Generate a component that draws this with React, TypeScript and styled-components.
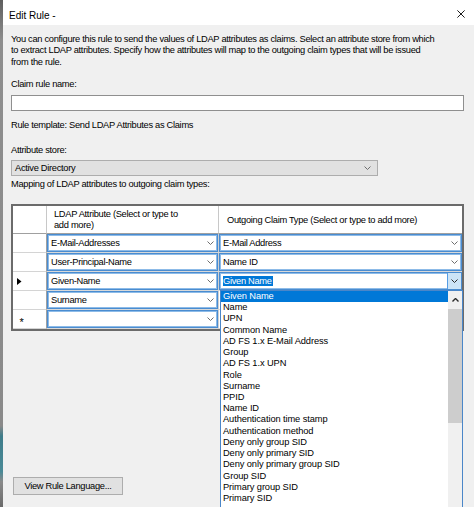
import React from 'react';
import styled, { createGlobalStyle } from 'styled-components';

const SANS = `"Liberation Sans", Arial, sans-serif`;

const Global = createGlobalStyle`
  html, body { margin: 0; padding: 0; width: 474px; height: 507px; overflow: hidden; background: #f0f0f0; }
  #root { width: 474px; height: 507px; }
  * { box-sizing: border-box; }
`;

const Screen = styled.div`
  position: relative;
  display: flex;
  width: 474px;
  height: 507px;
  overflow: hidden;
`;

const Backdrop = styled.div`
  flex: none;
  width: 3px;
  background: linear-gradient(
    to bottom,
    #5e5e5e 0%,
    #8e8e8e 8%,
    #8a8a8a 84%,
    #3e7c8a 86%,
    #4a8a97 93%,
    #8a8a8a 95%,
    #6a6a6a 100%
  );
`;

const Dialog = styled.div`
  flex: 1;
  display: flex;
  flex-direction: column;
  background: #f0f0f0;
`;

const TitleBar = styled.div`
  flex: none;
  height: 25px;
  background: #ffffff;
  display: flex;
  justify-content: space-between;
  align-items: flex-start;
  padding: 0 9px 0 6px;
`;

const TitleText = styled.span`
  margin-top: 9.5px;
  font-family: ${SANS};
  font-size: 10px;
  line-height: 12px;
  color: #000;
`;

const CloseGlyph = styled.svg`
  margin-top: 10px;
  width: 8px;
  height: 8px;
`;

const Body = styled.div`
  flex: 1;
  display: flex;
  flex-direction: column;
  padding: 0 10px 0 8px;
  font-family: ${SANS};
  font-size: 9.3px;
  letter-spacing: -0.3px;
  color: #000;
`;

const Description = styled.p`
  margin: 8.6px 0 0;
  line-height: 11.7px;
  white-space: nowrap;
`;

const Label = styled.div<{ $mt: number }>`
  margin-top: ${(p) => p.$mt}px;
  height: 12px;
  line-height: 12px;
  white-space: nowrap;
`;

const TextInput = styled.input`
  margin-top: 5px;
  height: 16px;
  width: 100%;
  background: #ffffff;
  border: 1px solid #8f8f8f;
  padding: 0 3px;
  outline: none;
  font-family: ${SANS};
  font-size: 9.3px;
`;

const StoreSelect = styled.div`
  margin-top: 4px;
  width: 367px;
  height: 16px;
  display: flex;
  align-items: center;
  justify-content: space-between;
  background: #e1e1e1;
  border: 1px solid #adadad;
  padding: 0 6px 0 3px;
  white-space: nowrap;
`;

const Grid = styled.div`
  margin-top: 14px;
  border: 2px solid #6b6b6b;
  background: #ffffff;
  display: grid;
  grid-template-columns: 34px 172px 243px;
`;

const HeaderCell = styled.div<{ $pl: number; $sep?: boolean }>`
  height: 28px;
  display: flex;
  align-items: center;
  padding: 1px 0 0 ${(p) => p.$pl}px;
  border-bottom: 1px solid #a0a0a0;
  border-right: ${(p) => (p.$sep ? '1px solid #c8c8c8' : 'none')};
  line-height: 11px;
  white-space: nowrap;
`;

const RowHeader = styled.div`
  height: 19px;
  display: flex;
  align-items: center;
  padding-left: 4px;
  border-right: 1px solid #a0a0a0;
  border-bottom: 1px solid #d4d4d4;
`;

const NewRowMark = styled.span`
  padding: 6px 0 0 2.6px;
  font-family: ${SANS};
  font-size: 11px;
  line-height: 11px;
`;

const Cell = styled.div<{ $sep?: boolean }>`
  height: 19px;
  border-bottom: 1px solid #d9d9d9;
  border-right: ${(p) => (p.$sep ? '1px solid #d0d0d0' : 'none')};
`;

const ComboBox = styled.div`
  height: 18px;
  display: flex;
  align-items: center;
  background: #ffffff;
  border: 1px solid #4a8cd0;
  box-shadow: inset 0 0 0 1px #8dbbe8;
  padding-left: 3px;
`;

const ComboText = styled.span`
  flex: 1;
  white-space: nowrap;
  overflow: hidden;
  line-height: 12px;
`;

const SelectedText = styled.span`
  display: inline-block;
  background: #0078d7;
  color: #ffffff;
  line-height: 10px;
  padding: 0 1px 0 0;
`;

const DropButton = styled.div<{ $active?: boolean }>`
  flex: none;
  width: 14px;
  height: 100%;
  display: flex;
  align-items: center;
  justify-content: center;
  background: ${(p) => (p.$active ? '#cce4f7' : 'transparent')};
  border-left: ${(p) => (p.$active ? '1px solid #569de5' : '1px solid transparent')};
`;

const ViewButton = styled.button`
  align-self: flex-start;
  margin: 146px 0 0 2px;
  width: 110px;
  height: 18px;
  padding: 0;
  background: #e1e1e1;
  border: 1px solid #adadad;
  font-family: ${SANS};
  font-size: 9.3px;
  letter-spacing: -0.3px;
  line-height: 14px;
  color: #000;
`;

const DropList = styled.div`
  position: absolute;
  left: 220px;
  top: 290px;
  width: 243px;
  height: 240px;
  z-index: 2;
  display: flex;
  background: #ffffff;
  border: 1px solid #4a86c8;
`;

const Items = styled.div`
  flex: 1;
  display: flex;
  flex-direction: column;
  font-family: ${SANS};
  font-size: 9.3px;
  letter-spacing: -0.1px;
`;

const Item = styled.div<{ $hl?: boolean }>`
  flex: none;
  height: 11.22px;
  line-height: 11.22px;
  padding-left: 2px;
  white-space: nowrap;
  background: ${(p) => (p.$hl ? '#0078d7' : 'transparent')};
  color: ${(p) => (p.$hl ? '#ffffff' : '#000000')};
`;

const ScrollBar = styled.div`
  flex: none;
  width: 14px;
  display: flex;
  flex-direction: column;
  background: #f0f0f0;
`;

const ScrollArrow = styled.div`
  flex: none;
  height: 18px;
  display: flex;
  align-items: center;
  justify-content: center;
`;

const ScrollThumb = styled.div`
  flex: none;
  height: 114px;
  background: #cdcdcd;
`;

const Chevron = ({ dark, up }: { dark?: boolean; up?: boolean }) => (
  <svg width="7" height="4" viewBox="0 0 7 4">
    <polyline
      points={up ? '0.5,3.5 3.5,0.5 6.5,3.5' : '0.5,0.5 3.5,3.5 6.5,0.5'}
      fill="none"
      stroke={dark ? '#2b2b2b' : '#6e6e6e'}
      strokeWidth={up ? 1.4 : 1}
    />
  </svg>
);

const RowArrow = () => (
  <svg width="5" height="7" viewBox="0 0 5 7" style={{ marginLeft: 0.3 }}>
    <polygon points="0,0 4.5,3.5 0,7" fill="#000" />
  </svg>
);

type Row = { ldap: string; claim: string; mark?: 'current' | 'new'; active?: boolean };

const rows: Row[] = [
  { ldap: 'E-Mail-Addresses', claim: 'E-Mail Address' },
  { ldap: 'User-Principal-Name', claim: 'Name ID' },
  { ldap: 'Given-Name', claim: 'Given Name', mark: 'current', active: true },
  { ldap: 'Surname', claim: '' },
  { ldap: '', claim: '', mark: 'new' },
];

const claimTypes = [
  'Given Name',
  'Name',
  'UPN',
  'Common Name',
  'AD FS 1.x E-Mail Address',
  'Group',
  'AD FS 1.x UPN',
  'Role',
  'Surname',
  'PPID',
  'Name ID',
  'Authentication time stamp',
  'Authentication method',
  'Deny only group SID',
  'Deny only primary SID',
  'Deny only primary group SID',
  'Group SID',
  'Primary group SID',
  'Primary SID',
];

export default function App() {
  return (
    <>
      <Global />
      <Screen>
        <Backdrop />
        <Dialog>
          <TitleBar>
            <TitleText>Edit Rule -</TitleText>
            <CloseGlyph viewBox="0 0 8 8">
              <path d="M0.4 0.4 L7.6 7.6 M7.6 0.4 L0.4 7.6" stroke="#000" strokeWidth="0.9" fill="none" />
            </CloseGlyph>
          </TitleBar>
          <Body>
            <Description>
              You can configure this rule to send the values of LDAP attributes as claims. Select an attribute store from which
              <br />
              to extract LDAP attributes. Specify how the attributes will map to the outgoing claim types that will be issued
              <br />
              from the rule.
            </Description>
            <Label $mt={9.3}>Claim rule name:</Label>
            <TextInput type="text" defaultValue="" />
            <Label $mt={8}>Rule template: Send LDAP Attributes as Claims</Label>
            <Label $mt={13}>Attribute store:</Label>
            <StoreSelect>
              <span>Active Directory</span>
              <Chevron />
            </StoreSelect>
            <Label $mt={2}>Mapping of LDAP attributes to outgoing claim types:</Label>
            <Grid>
              <HeaderCell $pl={0} $sep />
              <HeaderCell $pl={7} $sep>
                LDAP Attribute (Select or type to
                <br />
                add more)
              </HeaderCell>
              <HeaderCell $pl={8}>Outgoing Claim Type (Select or type to add more)</HeaderCell>
              {rows.map((r, i) => (
                <React.Fragment key={i}>
                  <RowHeader>
                    {r.mark === 'current' && <RowArrow />}
                    {r.mark === 'new' && <NewRowMark>*</NewRowMark>}
                  </RowHeader>
                  <Cell $sep>
                    <ComboBox>
                      <ComboText>{r.ldap}</ComboText>
                      <DropButton>
                        <Chevron />
                      </DropButton>
                    </ComboBox>
                  </Cell>
                  <Cell>
                    {i < 3 && (
                      <ComboBox>
                        <ComboText>
                          {r.active ? <SelectedText>{r.claim}</SelectedText> : r.claim}
                        </ComboText>
                        <DropButton $active={r.active}>
                          <Chevron dark={r.active} />
                        </DropButton>
                      </ComboBox>
                    )}
                  </Cell>
                </React.Fragment>
              ))}
            </Grid>
            <ViewButton type="button">View Rule Language...</ViewButton>
          </Body>
        </Dialog>
        <DropList>
          <Items>
            {claimTypes.map((c, i) => (
              <Item key={c} $hl={i === 0}>
                {c}
              </Item>
            ))}
          </Items>
          <ScrollBar>
            <ScrollArrow>
              <Chevron up dark />
            </ScrollArrow>
            <ScrollThumb />
          </ScrollBar>
        </DropList>
      </Screen>
    </>
  );
}
